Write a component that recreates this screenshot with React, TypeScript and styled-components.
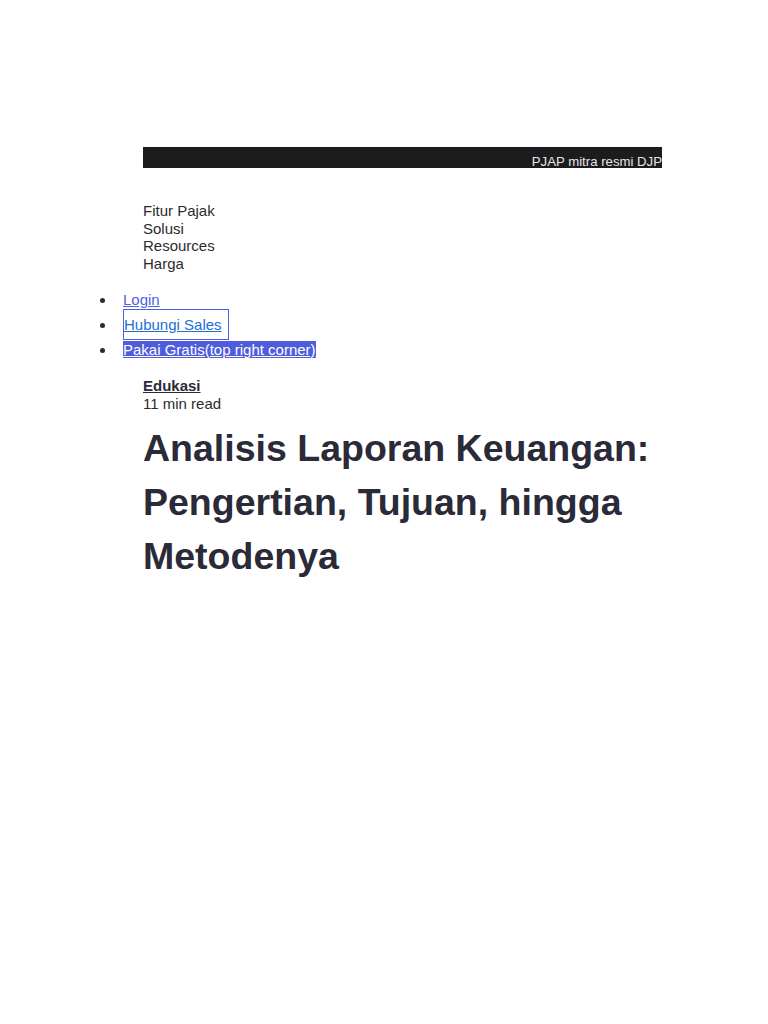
import styled, { createGlobalStyle } from "styled-components";

const GlobalStyle = createGlobalStyle`
  body {
    margin: 0;
    background: #ffffff;
    font-family: "Liberation Sans", Arial, sans-serif;
    font-size: 15px;
    color: #2b2b2e;
  }
`;

const links = [
  { label: "Login", variant: "plain" as const },
  { label: "Hubungi Sales", variant: "outlined" as const },
  { label: "Pakai Gratis(top right corner)", variant: "filled" as const },
];

export default function App() {
  return (
    <>
      <GlobalStyle />
      <Page>
        <TopBar>
          <TopBarText>PJAP mitra resmi DJP</TopBarText>
        </TopBar>
        <Nav>
          <span>Fitur Pajak</span>
          <span>Solusi</span>
          <span>Resources</span>
          <span>Harga</span>
        </Nav>
        <ActionList>
          {links.map((l) => (
            <ActionItem key={l.label}>
              <ActionLink href="#" $variant={l.variant}>
                {l.label}
              </ActionLink>
            </ActionItem>
          ))}
        </ActionList>
        <Meta>
          <Category href="#">Edukasi</Category>
          <span>11 min read</span>
        </Meta>
        <Title>Analisis Laporan Keuangan: Pengertian, Tujuan, hingga Metodenya</Title>
      </Page>
    </>
  );
}

const Page = styled.div`
  width: 519px;
  margin-left: 143px;
  padding-top: 147px;
`;

const TopBar = styled.div`
  height: 21px;
  background: #1c1c1e;
  display: flex;
  justify-content: flex-end;
  align-items: flex-end;
  overflow: hidden;
`;

const TopBarText = styled.span`
  font-size: 13.2px;
  line-height: 13px;
  color: #e6e6e6;
  white-space: nowrap;
`;

const Nav = styled.nav`
  display: flex;
  flex-direction: column;
  margin-top: 34px;
  line-height: 17.5px;
  color: #2b2b2e;
`;

const ActionList = styled.ul`
  margin: 19px 0 0 -60px;
  padding-left: 33px;
`;

const ActionItem = styled.li`
  padding-left: 7px;
  line-height: 17.4px;
  margin-bottom: 7.6px;
  color: #2b2b2e;
  &:last-child {
    margin-bottom: 0;
  }
`;

const ActionLink = styled.a<{ $variant: "plain" | "outlined" | "filled" }>`
  text-decoration: underline;
  color: ${(p) =>
    p.$variant === "plain"
      ? "#4f5fe6"
      : p.$variant === "outlined"
      ? "#1d6fd3"
      : "#ffffff"};
  background: ${(p) => (p.$variant === "filled" ? "#4f5cdc" : "transparent")};
  border: ${(p) => (p.$variant === "outlined" ? "1px solid #4f5fe6" : "none")};
  padding: ${(p) => (p.$variant === "outlined" ? "6px 6px 6px 0" : "0")};
`;

const Meta = styled.div`
  display: flex;
  flex-direction: column;
  margin-top: 19px;
  line-height: 18px;
`;

const Category = styled.a`
  font-weight: 700;
  color: #2b2b38;
  text-decoration: underline;
`;

const Title = styled.h1`
  margin: 8px 0 0;
  font-size: 37.5px;
  line-height: 54px;
  font-weight: 700;
  color: #2a2a38;
`;
